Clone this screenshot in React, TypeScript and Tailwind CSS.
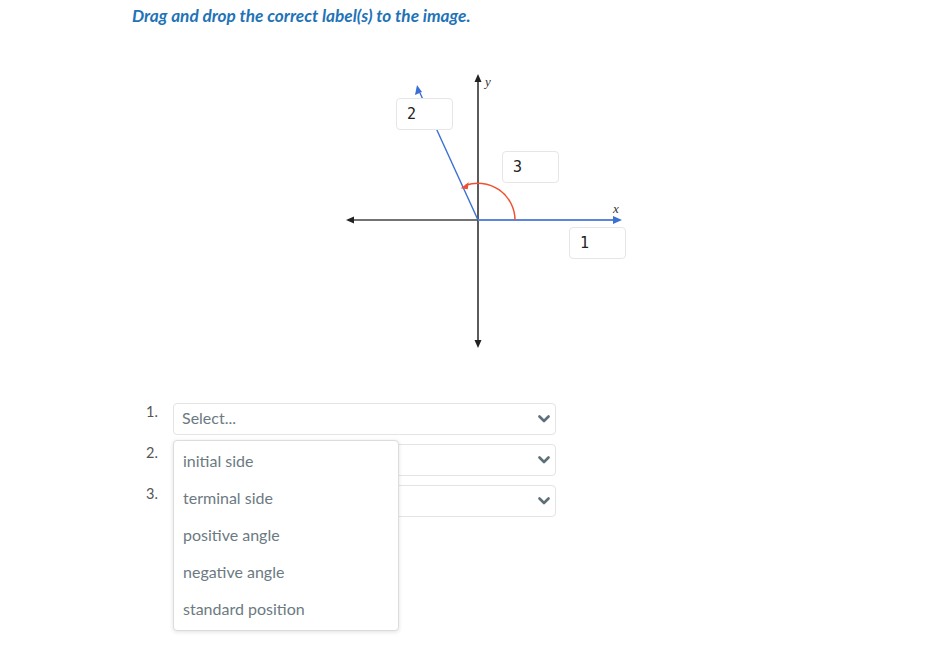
import React from "react";

const Chevron = () => (
  <svg width="12" height="8" viewBox="0 0 12 8">
    <path d="M1.5 1.5 L6 6 L10.5 1.5" fill="none" stroke="#5d707a" strokeWidth="2.6" strokeLinecap="round" strokeLinejoin="round" />
  </svg>
);

const LabelBox = ({ n, cls }: { n: string; cls: string }) => (
  <div className={`absolute w-[57px] h-[32px] bg-white border border-[#e6e6e6] rounded-[4px] flex items-center pl-[10px] text-[15px] text-[#222] ${cls}`} style={{ fontFamily: '"DejaVu Sans Mono", monospace' }}>
    {n}
  </div>
);

export default function App() {
  const items = ["initial side", "terminal side", "positive angle", "negative angle", "standard position"];
  const ang = (114.4 * Math.PI) / 180;
  const ex = 148 + 37 * Math.cos(ang);
  const ey = 160 - 37 * Math.sin(ang);
  return (
    <div className="w-[939px] h-[658px] bg-white relative" style={{ fontFamily: 'Lato, "Open Sans", sans-serif' }}>
      <div className="pl-[132px] pt-[4px]">
        <div className="text-[17.2px] font-bold italic text-[#1f73b7] leading-[23px]">Drag and drop the correct label(s) to the image.</div>
      </div>
      <div className="relative ml-[330px] mt-[33px] w-[310px] h-[300px]">
        <svg width="310" height="300" viewBox="0 0 310 300" className="absolute left-0 top-0">
          <line x1="148" y1="20" x2="148" y2="282" stroke="#333" strokeWidth="1.6" />
          <polygon points="148,14 144.5,22 151.5,22" fill="#222" />
          <polygon points="148,288 144.5,280 151.5,280" fill="#222" />
          <line x1="22" y1="160" x2="148" y2="160" stroke="#444" strokeWidth="1.6" />
          <polygon points="16,160 24,156.5 24,163.5" fill="#222" />
          <line x1="148" y1="160" x2="285" y2="160" stroke="#5b86dc" strokeWidth="2" />
          <polygon points="292,160 283,156 283,164" fill="#3b6fd4" />
          <line x1="148" y1="160" x2="90" y2="33" stroke="#3b6fd4" strokeWidth="1.4" />
          <polygon points="87,25 85,35 92,32" fill="#3b6fd4" />
          <path d={`M185 160 A37 37 0 0 0 ${ex + 3} ${ey - 1}`} fill="none" stroke="#ef5030" strokeWidth="1.5" />
          <polygon points={`${ex - 2},${ey + 2} ${ex + 6},${ey - 4} ${ex + 5},${ey + 3}`} fill="#ef5030" />
          <text x="155" y="26" fontSize="13" fontStyle="italic" fill="#333" fontFamily="'Liberation Serif', serif">y</text>
          <text x="283" y="153" fontSize="13" fontStyle="italic" fill="#333" fontFamily="'Liberation Serif', serif">x</text>
        </svg>
        <LabelBox n="2" cls="left-[66px] top-[38px]" />
        <LabelBox n="3" cls="left-[172px] top-[91px]" />
        <LabelBox n="1" cls="left-[239px] top-[167px]" />
      </div>
      <div className="mt-[43px] pl-[146px] flex flex-col gap-[9px]">
        {["1.", "2.", "3."].map((n, i) => (
          <div key={n} className="flex items-start">
            <div className="w-[27px] text-[14.5px] text-[#555] leading-[18px]">{n}</div>
            <div className="w-[383px] h-[32px] border border-[#e4e4e4] rounded-[4px] flex items-center justify-between pl-[8px] pr-[5px]">
              <span className="text-[16px] text-[#6b7a82] -mt-[2px]">{i === 0 ? "Select..." : ""}</span>
              <Chevron />
            </div>
          </div>
        ))}
      </div>
      <div className="absolute left-[173px] top-[440px] w-[226px] h-[191px] bg-white border border-[#dcdcdc] rounded-[4px] shadow-[0_1px_4px_rgba(0,0,0,0.12)] pt-[1px]">
        {items.map((t) => (
          <div key={t} className="h-[37px] flex items-center pl-[9px] text-[16px] text-[#6b7a82]">{t}</div>
        ))}
      </div>
    </div>
  );
}
